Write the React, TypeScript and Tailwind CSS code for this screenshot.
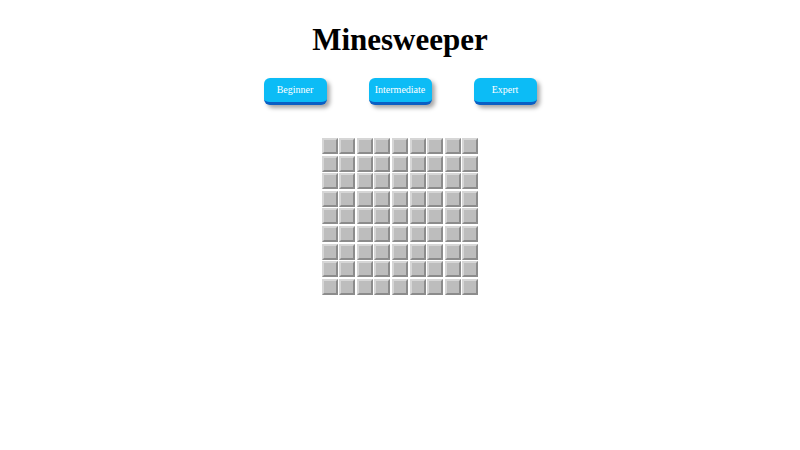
import React from 'react';

const LEVELS = ['Beginner', 'Intermediate', 'Expert'];
const SIZE = 9;

export default function App() {
  const cells = Array.from({ length: SIZE * SIZE }, (_, i) => i);
  return (
    <div className="min-h-screen bg-white flex flex-col items-center font-['Liberation_Serif',serif]">
      {/* Title */}
      <h1 className="mt-[21px] mb-[20px] text-[31px] leading-[37px] font-bold text-black">
        Minesweeper
      </h1>

      {/* Difficulty buttons */}
      <div className="flex gap-[42px]">
        {LEVELS.map((level) => (
          <button
            key={level}
            className="w-[63px] h-[27px] pb-[1px] rounded-[6px] bg-[#0cbcf6] border-b-[3px] border-[#0a5fc4] text-white text-[10px] shadow-[3px_3px_4px_rgba(0,0,0,0.35)]"
          >
            {level}
          </button>
        ))}
      </div>

      {/* Board */}
      <div className="mt-[33px] grid grid-cols-[repeat(9,16px)] gap-[1.6px]">
        {cells.map((i) => (
          <div
            key={i}
            className="w-[16px] h-[16px] bg-[#bdbdbd] border-2 border-t-[#d6d6d6] border-l-[#d6d6d6] border-b-[#8c8c8c] border-r-[#8c8c8c]"
          />
        ))}
      </div>
    </div>
  );
}
